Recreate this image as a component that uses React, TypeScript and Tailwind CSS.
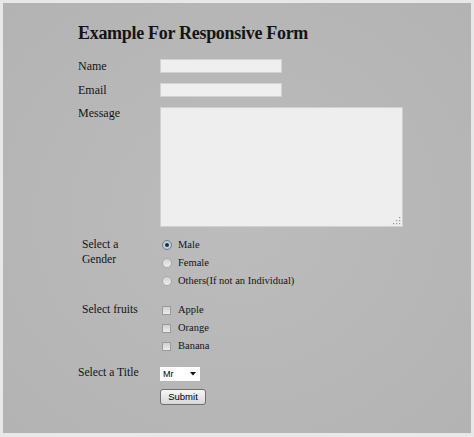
import React from "react";

function Radio({ checked, label }: { checked?: boolean; label: string }) {
  return (
    <div className="flex items-center h-[18px] leading-[18px]">
      <span
        className={
          "ml-[2px] w-[10px] h-[10px] rounded-full border flex items-center justify-center " +
          (checked
            ? "border-[#6e7f90] bg-[radial-gradient(circle,#dbe8f2,#aabccb)]"
            : "border-[#a8a8a8] bg-[linear-gradient(#d2d2d2,#eeeeee)]")
        }
      >
        {checked && <span className="w-[4px] h-[4px] rounded-full bg-[#1f2f3d]" />}
      </span>
      <span className="ml-[6px] text-[10.5px]">{label}</span>
    </div>
  );
}

function Check({ label }: { label: string }) {
  return (
    <div className="flex items-center h-[18px] leading-[18px]">
      <span className="ml-[2px] w-[9px] h-[9px] border border-[#9a9a9a] bg-[linear-gradient(#d0d0d0,#ececec)]" />
      <span className="ml-[7px] text-[10.5px]">{label}</span>
    </div>
  );
}

export default function App() {
  return (
    <div className="w-[474px] h-[437px] bg-[#e8e8e8] pt-[3px] px-[3px] pb-[4px]">
      <div className="h-full bg-[radial-gradient(ellipse_at_center,#bcbcbc,#b3b3b3)] pl-[75px] pt-[19px] font-['Liberation_Serif',serif] text-[#141414] text-[12px] leading-[14px]">
        <h1 className="text-[18px] leading-[22px] font-bold tracking-[-0.3px]">Example For Responsive Form</h1>

        <div className="mt-[15px] flex">
          <div className="w-[82px]">Name</div>
          <div className="w-[122px] h-[14px] bg-[#efefef] border border-[#d2d2d2]" />
        </div>
        <div className="mt-[10px] flex">
          <div className="w-[82px]">Email</div>
          <div className="w-[122px] h-[14px] bg-[#efefef] border border-[#d2d2d2]" />
        </div>
        <div className="mt-[9px] flex">
          <div className="w-[82px]">Message</div>
          <div className="relative mt-[1px] w-[243px] h-[120px] bg-[#eeeeee] border border-[#d0d0d0]">
            <svg className="absolute right-[1px] bottom-[1px]" width="9" height="9" viewBox="0 0 9 9">
              <g fill="#9a9a9a">
                <rect x="7" y="1" width="1.2" height="1.2" />
                <rect x="4" y="4" width="1.2" height="1.2" />
                <rect x="7" y="4" width="1.2" height="1.2" />
                <rect x="1" y="7" width="1.2" height="1.2" />
                <rect x="4" y="7" width="1.2" height="1.2" />
                <rect x="7" y="7" width="1.2" height="1.2" />
              </g>
            </svg>
          </div>
        </div>

        <div className="mt-[9px] flex">
          <div className="w-[82px] pl-[4px] pt-[1px] leading-[15px] text-[11.6px]">
            Select a
            <br />
            Gender
          </div>
          <div className="flex flex-col">
            <Radio checked label="Male" />
            <Radio label="Female" />
            <Radio label="Others(If not an Individual)" />
          </div>
        </div>

        <div className="mt-[11px] flex">
          <div className="w-[82px] pl-[4px] leading-[18px] text-[11.6px]">Select fruits</div>
          <div className="flex flex-col">
            <Check label="Apple" />
            <Check label="Orange" />
            <Check label="Banana" />
          </div>
        </div>

        <div className="mt-[11px] flex">
          <div className="w-[82px] text-[11.6px]">Select a Title</div>
          <div className="mt-[1px] w-[40px] h-[14px] bg-white flex items-center pl-[3px] pr-[4px] font-['Liberation_Sans',sans-serif] text-[9px] text-black">
            <span className="flex-1">Mr</span>
            <svg width="6" height="4" viewBox="0 0 6 4">
              <path d="M0 0 L6 0 L3 3.5 Z" fill="#111" />
            </svg>
          </div>
        </div>

        <div className="mt-[8px] pl-[82px]">
          <div className="w-[46px] h-[16px] rounded-[3px] border border-[#6f6f6f] bg-[linear-gradient(#f6f6f6,#d8d8d8)] flex items-center justify-center font-['Liberation_Sans',sans-serif] text-[9.5px] text-black">
            Submit
          </div>
        </div>
      </div>
    </div>
  );
}
